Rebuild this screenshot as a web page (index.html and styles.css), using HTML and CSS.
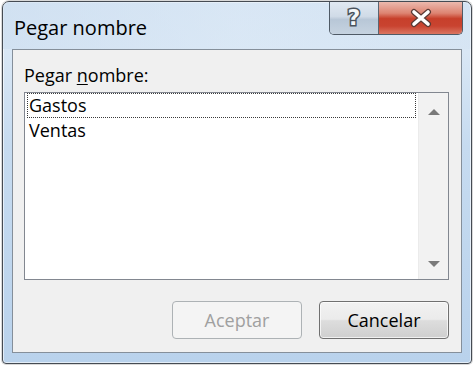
FILE: index.html
```html
<!DOCTYPE html>
<html lang="es">
<head>
<meta charset="utf-8">
<title>Pegar nombre</title>
<link rel="stylesheet" href="styles.css">
</head>
<body>
<div class="window">
  <div class="titlebar">
    <span class="title">Pegar nombre</span>
    <div class="caption-buttons">
      <div class="cap-btn help"><span class="help-glyph">?</span></div>
      <div class="cap-btn close">
        <svg width="26" height="20" viewBox="0 0 26 20">
          <path d="M6 4 L20 16 M20 4 L6 16" stroke="#5a3a35" stroke-width="6" stroke-linecap="round"/>
          <path d="M6 4 L20 16 M20 4 L6 16" stroke="#ffffff" stroke-width="3.6" stroke-linecap="round"/>
        </svg>
      </div>
    </div>
  </div>
  <div class="panel">
    <div class="label">Pegar <u>n</u>ombre:</div>
    <div class="listbox">
      <div class="items">
        <div class="item focused">Gastos</div>
        <div class="item">Ventas</div>
      </div>
      <div class="scrollbar">
        <span class="arrow up"></span>
        <span class="arrow down"></span>
      </div>
    </div>
    <div class="buttons">
      <div class="btn disabled">Aceptar</div>
      <div class="btn">Cancelar</div>
    </div>
  </div>
</div>
</body>
</html>
```
FILE: styles.css
```css
html, body {
  margin: 0;
  padding: 0;
  background: #ffffff;
}
body {
  width: 474px;
  height: 367px;
  overflow: hidden;
  font-family: "Open Sans", "Noto Sans", sans-serif;
}
.window {
  margin: 1px 2px 0 2px;
  width: 468px;
  height: 361px;
  border: 1px solid #454b53;
  border-radius: 7px 7px 4px 4px;
  background: linear-gradient(180deg, #d6e5f4 0%, #d9e7f5 14%, #c6dbf0 40%, #b9d2ec 100%);
  box-shadow: inset 0 0 0 1px rgba(255,255,255,0.6), 0 0 0 1px rgba(0,0,0,0.15);
  display: flex;
  flex-direction: column;
  overflow: hidden;
}
.titlebar {
  height: 47px;
  display: flex;
  align-items: flex-start;
  justify-content: space-between;
  padding: 0 8px 0 11px;
  background: linear-gradient(90deg, rgba(205,222,240,0.6), rgba(220,233,246,0.4) 50%, rgba(205,222,240,0.2));
}
.title {
  margin-top: 12px;
  font-size: 20px;
  color: #000000;
}
.caption-buttons {
  display: flex;
  height: 32px;
  border: 1px solid #4f5a66;
  border-top: none;
  border-radius: 0 0 5px 5px;
  overflow: hidden;
}
.cap-btn {
  display: flex;
  align-items: center;
  justify-content: center;
  height: 100%;
}
.help {
  width: 48px;
  border-right: 1px solid #5a6571;
  background: linear-gradient(#e1e9f2 0%, #d0dbe7 45%, #b8c7d7 55%, #c6d3e0 100%);
}
.help-glyph {
  font-family: "DejaVu Sans", sans-serif;
  font-weight: bold;
  font-size: 22px;
  line-height: 22px;
  color: #f4f6f9;
  -webkit-text-stroke: 3px #4a525c;
  paint-order: stroke fill;
  margin-top: -1px;
}
.close {
  width: 83px;
  background: linear-gradient(#ecb9ad 0%, #dd8472 35%, #c7402b 52%, #c94330 75%, #da7561 100%);
}
.panel {
  margin: 0 9px 10px 9px;
  flex: 1;
  border: 1px solid #858f9a;
  background: #f0f0f0;
  display: flex;
  flex-direction: column;
  padding: 0 12px 13px 11px;
}
.label {
  margin-top: 13px;
  font-size: 18px;
  color: #000;
  line-height: 24px;
}
.label u {
  text-decoration-thickness: 1px;
  text-underline-offset: 2px;
}
.listbox {
  margin-top: 5px;
  height: 186px;
  border: 1px solid #828790;
  background: #ffffff;
  display: flex;
}
.items {
  flex: 1;
  padding: 0 2px 0 2px;
}
.item {
  height: 24px;
  line-height: 23px;
  font-size: 18px;
  color: #000;
  padding-left: 1px;
  border: 1px solid transparent;
  box-sizing: border-box;
}
.item.focused {
  border: 1px dotted #3a3a3a;
  height: 25px;
}
.scrollbar {
  width: 29px;
  background: #f2f2f2;
  border-left: 1px solid #ebebeb;
  position: relative;
}
.arrow {
  position: absolute;
  left: 9px;
  width: 0;
  height: 0;
  border-left: 6px solid transparent;
  border-right: 6px solid transparent;
}
.arrow.up {
  top: 16px;
  border-bottom: 6px solid #7a7a7a;
}
.arrow.down {
  bottom: 12px;
  border-top: 6px solid #7a7a7a;
}
.buttons {
  margin-top: auto;
  display: flex;
  justify-content: flex-end;
  gap: 17px;
}
.btn {
  width: 128px;
  height: 36px;
  border: 1px solid #707070;
  border-radius: 4px;
  background: linear-gradient(#f2f2f2 0%, #ebebeb 48%, #dddddd 52%, #cfcfcf 100%);
  box-shadow: inset 0 0 0 1px rgba(255,255,255,0.7);
  display: flex;
  align-items: center;
  justify-content: center;
  font-size: 18px;
  color: #000;
}
.btn.disabled {
  border-color: #adb2b5;
  background: #f4f4f4;
  color: #a0a0a0;
  box-shadow: none;
}
```
